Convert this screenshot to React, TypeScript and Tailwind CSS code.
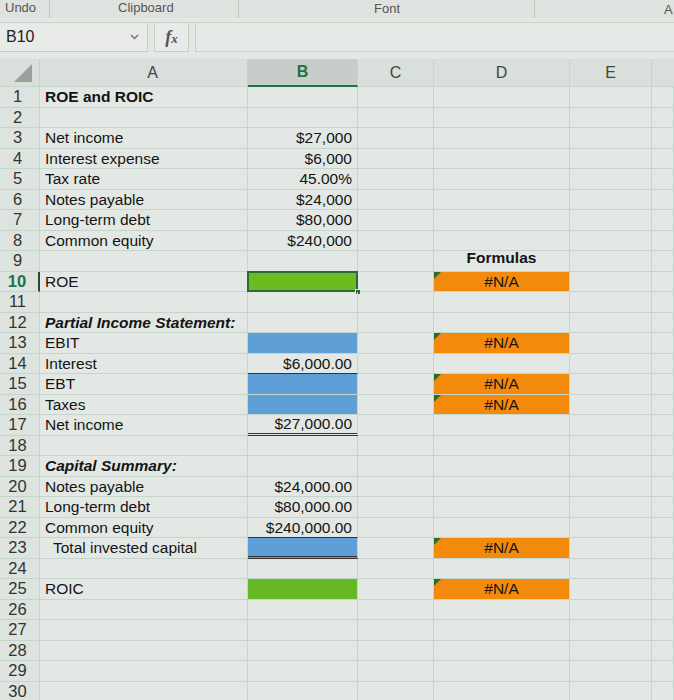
import React from "react";

type RowDef = {
  a?: string;
  aCls?: string;
  b?: string;
  bCls?: string;
  selected?: boolean;
  d?: string;
  dCls?: string;
  err?: boolean;
};

const BLUE = "bg-[#5e9fd8]";
const GREEN = "bg-[#66b824]";

const rows: RowDef[] = [
  { a: "ROE and ROIC", aCls: "font-bold" },
  {},
  { a: "Net income", b: "$27,000" },
  { a: "Interest expense", b: "$6,000" },
  { a: "Tax rate", b: "45.00%" },
  { a: "Notes payable", b: "$24,000" },
  { a: "Long-term debt", b: "$80,000" },
  { a: "Common equity", b: "$240,000" },
  { d: "Formulas", dCls: "font-bold items-end pb-[1px]" },
  { a: "ROE", selected: true, d: "#N/A", err: true },
  {},
  { a: "Partial Income Statement:", aCls: "font-bold italic" },
  { a: "EBIT", bCls: BLUE, d: "#N/A", err: true },
  { a: "Interest", b: "$6,000.00", bCls: "border-b-[#333]" },
  { a: "EBT", bCls: BLUE, d: "#N/A", err: true },
  { a: "Taxes", bCls: BLUE, d: "#N/A", err: true },
  { a: "Net income", b: "$27,000.00", bCls: "border-b-[3px] border-double border-b-[#333]" },
  {},
  { a: "Capital Summary:", aCls: "font-bold italic" },
  { a: "Notes payable", b: "$24,000.00" },
  { a: "Long-term debt", b: "$80,000.00" },
  { a: "Common equity", b: "$240,000.00", bCls: "border-b-[#333]" },
  {
    a: "Total invested capital",
    aCls: "pl-[13px]",
    bCls: `${BLUE} border-b-[3px] border-double border-b-[#333]`,
    d: "#N/A",
    err: true,
  },
  {},
  { a: "ROIC", bCls: GREEN, d: "#N/A", err: true },
  {},
  {},
  {},
  {},
  {},
];

const cols = "grid grid-cols-[40px_208px_110px_76px_136px_82px_1fr]";
const cell = "border-r border-b border-[#c3d5cc] h-[20.5px] flex items-center";

function Row({ r, n }: { r: RowDef; n: number }) {
  return (
    <div className={cols}>
      <div
        className={`${cell} justify-center pr-[4px] bg-[#dde3de] text-[16.5px] ${
          r.selected
            ? "font-bold text-[#217346] border-r-2 border-r-[#2b4a36] bg-[#cfd6d0]"
            : "text-[#333]"
        }`}
      >
        {n}
      </div>
      <div className={`${cell} pl-[5px] whitespace-nowrap ${r.aCls ?? ""}`}>{r.a}</div>
      <div className={`${cell} justify-end pr-[5px] relative ${r.bCls ?? ""}`}>
        {r.selected ? (
          <>
            <div className="absolute inset-x-[-1px] inset-y-[-1px] border-2 border-[#2a6a3c] bg-[#6cbc1f]" />
            <div className="absolute right-[-4px] bottom-[-4px] w-[6px] h-[6px] bg-[#2a6a3c] border border-[#e3e8e4]" />
          </>
        ) : (
          r.b
        )}
      </div>
      <div className={cell} />
      <div
        className={`${cell} justify-center relative ${r.err ? "bg-[#f48a0c]" : ""} ${r.dCls ?? ""}`}
      >
        {r.err && (
          <div className="absolute left-0 top-0 w-0 h-0 border-t-[7px] border-t-[#2d6b2a] border-r-[7px] border-r-transparent" />
        )}
        {r.d}
      </div>
      <div className={cell} />
      <div className={cell} />
    </div>
  );
}

export default function App() {
  return (
    <div
      className="w-[674px] h-[700px] overflow-hidden bg-[#e3e8e4] text-[#141414] text-[15.5px]"
      style={{ fontFamily: '"Liberation Sans", Arial, sans-serif' }}
    >
      {/* ribbon group labels */}
      <div className="h-[18px] relative bg-[#dfe3df] text-[#555] text-[13px] leading-none">
        <span className="absolute left-[5px] top-[1px]">Undo</span>
        <div className="absolute left-[49px] top-0 h-[18px] border-l border-[#c4c9c4]" />
        <span className="absolute left-[118px] top-[1px]">Clipboard</span>
        <div className="absolute left-[238px] top-0 h-[18px] border-l border-[#c4c9c4]" />
        <span className="absolute left-[374px] top-[2px]">Font</span>
        <div className="absolute left-[534px] top-0 h-[18px] border-l border-[#c4c9c4]" />
        <span className="absolute left-[664px] top-[3px]">A</span>
      </div>

      {/* formula bar */}
      <div className="flex items-stretch gap-[6px] h-[30px] mt-[4px] border-t border-[#ccd1cc]">
        <div className="w-[148px] flex items-center justify-between pl-[6px] pr-[8px] bg-[#e8ebe8] border-r border-b border-[#c9cec9] text-[16px] text-[#222]">
          <span>B10</span>
          <svg width="9" height="6" viewBox="0 0 9 6" fill="none" stroke="#777" strokeWidth="1.5">
            <path d="M1 1l3.5 3.5L8 1" />
          </svg>
        </div>
        <div className="w-[35px] flex items-center justify-center bg-[#e8ebe8] border border-[#c9cec9] border-t-0">
          <span
            className="text-[#555] italic font-bold text-[18px] leading-none"
            style={{ fontFamily: '"Liberation Serif", serif' }}
          >
            f<span className="text-[13px]">x</span>
          </span>
        </div>
        <div className="flex-1 bg-[#e6eae6] border-l border-b border-[#c9cec9]" />
      </div>

      {/* column headers */}
      <div className={`${cols} mt-[7px] h-[28px] bg-[#d9dfda] text-[16px] text-[#444]`}>
        <div className="relative border-r border-b border-[#c3d5cc]">
          <div className="absolute left-[14px] bottom-[4px] w-0 h-0 border-b-[18px] border-b-[#9c9f9c] border-l-[18px] border-l-transparent" />
        </div>
        <div className="border-r border-b border-[#c3d5cc] flex items-center justify-center pl-[18px]">A</div>
        <div className="border-r border-b-2 border-[#c3d5cc] border-b-[#217346] bg-[#c7cdc8] flex items-center justify-center font-bold text-[#217346]">
          B
        </div>
        <div className="border-r border-b border-[#c3d5cc] flex items-center justify-center">C</div>
        <div className="border-r border-b border-[#c3d5cc] flex items-center justify-center">D</div>
        <div className="border-r border-b border-[#c3d5cc] flex items-center justify-center">E</div>
        <div className="border-b border-[#c3d5cc]" />
      </div>

      {rows.map((r, i) => (
        <Row key={i} r={r} n={i + 1} />
      ))}
    </div>
  );
}
